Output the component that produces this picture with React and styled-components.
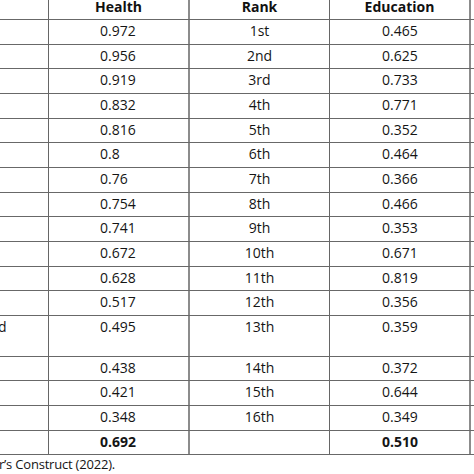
import React from "react";
import styled, { createGlobalStyle } from "styled-components";

const Global = createGlobalStyle`
  html, body { margin: 0; padding: 0; background: #ffffff; }
  body { overflow: hidden; font-family: "Open Sans", "Noto Sans", sans-serif; color: #151515; }
`;

const Page = styled.div`
  width: 474px;
  height: 474px;
  overflow: hidden;
  background: #ffffff;
`;

const Table = styled.div`
  display: flex;
  flex-direction: column;
`;

const Row = styled.div`
  display: grid;
  grid-template-columns: 49px 141px 140px 141px 1fr;
  box-sizing: border-box;
  height: ${(p) => p.$h}px;
  border-bottom: 1px solid #686868;
`;

const Cell = styled.div`
  box-sizing: border-box;
  overflow: hidden;
  white-space: nowrap;
  font-size: 14px;
  line-height: 14px;
  padding-top: ${(p) => (p.$head ? 0 : 4)}px;
  border-right: ${(p) =>
    p.$thick ? "2px solid #8c8c8c" : p.$none ? "none" : "1px solid #666666"};
`;

const NameCell = styled(Cell)`
  text-indent: -2px;
`;

const ValueCell = styled(Cell)`
  padding-left: ${(p) => p.$pad}px;
  font-weight: ${(p) => (p.$bold ? 700 : 400)};
`;

const RankCell = styled(Cell)`
  text-align: center;
`;

const HeadCell = styled(Cell)`
  text-align: center;
  font-weight: 700;
  color: #111;
`;

const Caption = styled.div`
  margin-top: 1px;
  font-size: 13px;
  line-height: 16px;
  letter-spacing: -0.2px;
  white-space: nowrap;
  text-indent: -1px;
`;

const rows = [
  ["", "0.972", "1st", "0.465"],
  ["", "0.956", "2nd", "0.625"],
  ["", "0.919", "3rd", "0.733"],
  ["", "0.832", "4th", "0.771"],
  ["", "0.816", "5th", "0.352"],
  ["", "0.8", "6th", "0.464"],
  ["", "0.76", "7th", "0.366"],
  ["", "0.754", "8th", "0.466"],
  ["", "0.741", "9th", "0.353"],
  ["", "0.672", "10th", "0.671"],
  ["", "0.628", "11th", "0.819"],
  ["", "0.517", "12th", "0.356"],
  ["d", "0.495", "13th", "0.359", 41],
  ["", "0.438", "14th", "0.372", 24.6],
  ["", "0.421", "15th", "0.644", 24.6],
  ["", "0.348", "16th", "0.349", 24.6],
];

export default function App() {
  return (
    <Page>
      <Global />
      <Table>
        <Row $h={20}>
          <HeadCell $head />
          <HeadCell $head $thick>Health</HeadCell>
          <HeadCell $head>Rank</HeadCell>
          <HeadCell $head $thick>Education</HeadCell>
          <HeadCell $head $none />
        </Row>
        {rows.map(([name, health, rank, edu, h]) => (
          <Row key={rank} $h={h || 24.67}>
            <NameCell>{name}</NameCell>
            <ValueCell $thick $pad={51}>{health}</ValueCell>
            <RankCell>{rank}</RankCell>
            <ValueCell $thick $pad={52}>{edu}</ValueCell>
            <Cell $none />
          </Row>
        ))}
        <Row $h={24.6}>
          <NameCell />
          <ValueCell $thick $pad={51} $bold>0.692</ValueCell>
          <RankCell />
          <ValueCell $thick $pad={52} $bold>0.510</ValueCell>
          <Cell $none />
        </Row>
      </Table>
      <Caption>r’s Construct (2022).</Caption>
    </Page>
  );
}
